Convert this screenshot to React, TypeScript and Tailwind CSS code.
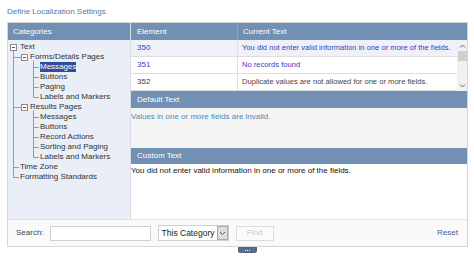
import React from "react";

type Node = { label: string; pl: string; selected?: boolean };

const tree: Node[] = [
  { label: "Text", pl: "pl-[12px]" },
  { label: "Forms/Details Pages", pl: "pl-[22px]" },
  { label: "Messages", pl: "pl-[32px]", selected: true },
  { label: "Buttons", pl: "pl-[32px]" },
  { label: "Paging", pl: "pl-[32px]" },
  { label: "Labels and Markers", pl: "pl-[32px]" },
  { label: "Results Pages", pl: "pl-[22px]" },
  { label: "Messages", pl: "pl-[32px]" },
  { label: "Buttons", pl: "pl-[32px]" },
  { label: "Record Actions", pl: "pl-[32px]" },
  { label: "Sorting and Paging", pl: "pl-[32px]" },
  { label: "Labels and Markers", pl: "pl-[32px]" },
  { label: "Time Zone", pl: "pl-[12px]" },
  { label: "Formatting Standards", pl: "pl-[12px]" },
];

const rows = [
  { id: "350", text: "You did not enter valid information in one or more of the fields.", link: true, active: true },
  { id: "351", text: "No records found", link: true },
  { id: "352", text: "Duplicate values are not allowed for one or more fields." },
];

// y centre of a tree row inside the tree box
const cy = (i: number) => 7.5 + i * 10;

const TreeLines = () => {
  const minusBox = (x: number, y: number) => (
    <g key={`b${x}-${y}`}>
      <rect x={x} y={y - 3} width={6} height={6} fill="#fff" stroke="#8c8c8c" />
      <line x1={x + 1.5} x2={x + 4.5} y1={y} y2={y} stroke="#555" />
    </g>
  );
  const tick = (x1: number, x2: number, y: number) => (
    <line key={`t${x1}-${y}`} x1={x1} x2={x2} y1={y} y2={y} stroke="#9a9a9a" />
  );
  return (
    <svg className="absolute left-0 top-0 pointer-events-none" width="122" height="150">
      {/* level 1 spine */}
      <line x1={5.5} x2={5.5} y1={cy(0) + 3} y2={cy(13)} stroke="#9a9a9a" />
      {tick(5.5, 13.5, cy(1))}
      {tick(5.5, 13.5, cy(6))}
      {tick(5.5, 11, cy(12))}
      {tick(5.5, 11, cy(13))}
      {/* level 2 spines */}
      <line x1={25.5} x2={25.5} y1={cy(1) + 3} y2={cy(5)} stroke="#9a9a9a" />
      <line x1={25.5} x2={25.5} y1={cy(6) + 3} y2={cy(11)} stroke="#9a9a9a" />
      {[2, 3, 4, 5, 7, 8, 9, 10, 11].map((i) => tick(25.5, 31, cy(i)))}
      {minusBox(2.5, cy(0))}
      {minusBox(13.5, cy(1))}
      {minusBox(13.5, cy(6))}
    </svg>
  );
};

export default function App() {
  return (
    <div className="w-[474px] h-[263px] bg-white text-[8px] leading-[10px] text-[#333] font-['Liberation_Sans',Arial,sans-serif]">
      <div className="h-[22px] pl-[7px] pt-[7px] text-[#4d7aaa]">Define Localization Settings</div>

      <div className="ml-[7px] w-[461px] border border-[#d6d6d6] flex flex-col">
        <div className="flex h-[196px]">
          {/* categories */}
          <div className="w-[123px] shrink-0 bg-[#e9eef7] border-r border-[#d6dbe4] flex flex-col">
            <div className="h-[17px] bg-[#7190b4] text-white pl-[5px] flex items-center">Categories</div>
            <div className="relative pt-[2px]">
              <TreeLines />
              {tree.map((n, i) => (
                <div key={i} className={`h-[10px] flex items-center ${n.pl}`}>
                  {n.selected ? (
                    <span className="bg-[#2f4d9c] text-white leading-[10px]">{n.label}</span>
                  ) : (
                    <span>{n.label}</span>
                  )}
                </div>
              ))}
            </div>
          </div>

          {/* texts */}
          <div className="flex-1 min-w-0 flex flex-col">
            <div className="flex h-[17px] bg-[#7190b4] text-white">
              <div className="w-[107px] shrink-0 pl-[6px] border-r border-[#8ba5c4] flex items-center">Element</div>
              <div className="flex-1 pl-[5px] flex items-center">Current Text</div>
            </div>
            <div className="flex h-[51px]">
              <div className="flex-1 min-w-0 flex flex-col">
                {rows.map((r) => (
                  <div
                    key={r.id}
                    className={`h-[17px] flex border-b border-[#dedede] ${r.active ? "bg-[#eef1f8]" : "bg-white"} ${r.link ? "text-[#3b3bc4]" : "text-[#444]"}`}
                  >
                    <div className="w-[107px] shrink-0 pl-[6px] border-r border-[#dedede] flex items-center">{r.id}</div>
                    <div className="flex-1 min-w-0 pl-[4px] flex items-center whitespace-nowrap text-[7.6px]">{r.text}</div>
                  </div>
                ))}
              </div>
              <div className="w-[10px] shrink-0 bg-[#f1f1f1] flex flex-col items-center">
                <svg width="7" height="7" viewBox="0 0 7 7" className="mt-[3px]">
                  <path d="M1 4.5 L3.5 2 L6 4.5" fill="none" stroke="#666" />
                </svg>
                <div className="w-[9px] h-[10px] bg-[#cfcfcf] mt-[1px]" />
                <div className="flex-1" />
                <svg width="7" height="7" viewBox="0 0 7 7" className="mb-[2px]">
                  <path d="M1 2.5 L3.5 5 L6 2.5" fill="none" stroke="#666" />
                </svg>
              </div>
            </div>
            <div className="h-[17px] bg-[#7190b4] text-white pl-[6px] flex items-center">Default Text</div>
            <div className="h-[40px] bg-[#f4f4f4] text-[#4d8ab2] pt-[4px]">Values in one or more fields are invalid.</div>
            <div className="h-[16px] bg-[#7190b4] text-white pl-[6px] flex items-center">Custom Text</div>
            <div className="flex-1 bg-white text-[#111] pt-[2px]">
              You did not enter valid information in one or more of the fields.
            </div>
          </div>
        </div>

        {/* search bar */}
        <div className="h-[27px] border-t border-[#e2e2e2] bg-[#fafafa] flex items-center pl-[8px] pr-[9px]">
          <span className="text-[#444]">Search:</span>
          <div className="ml-[6px] w-[101px] h-[15px] bg-white border border-[#cfcfcf]" />
          <div className="ml-[7px] w-[71px] h-[16px] bg-white border border-[#cfcfcf] flex items-center">
            <span className="pl-[3px] flex-1 text-[8.5px] text-[#222]">This Category</span>
            <div className="w-[11px] h-[14px] bg-[#dedede] border border-[#a9a9a9] flex items-center justify-center">
              <svg width="7" height="5" viewBox="0 0 7 5">
                <path d="M1 1 L3.5 3.5 L6 1" fill="none" stroke="#555" />
              </svg>
            </div>
          </div>
          <div className="ml-[7px] w-[38px] h-[15px] border border-[#dcdcdc] bg-[#fbfbfb] text-[#c8c8c8] flex items-center justify-center">
            Find
          </div>
          <div className="flex-1" />
          <span className="text-[#3f5f8f]">Reset</span>
        </div>
      </div>

      <div className="ml-[238px] w-[19px] h-[6px] bg-[#56698a] rounded-b-[2px] flex items-center justify-center gap-[1px]">
        <span className="w-[1px] h-[1px] bg-white" />
        <span className="w-[1px] h-[1px] bg-white" />
        <span className="w-[1px] h-[1px] bg-white" />
      </div>
    </div>
  );
}
